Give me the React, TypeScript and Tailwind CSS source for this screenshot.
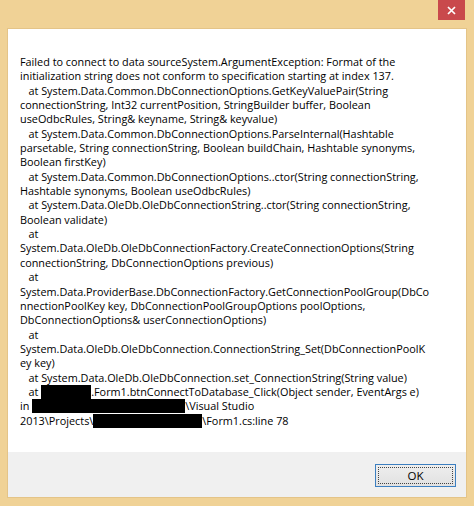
import React from 'react';

const lines: string[] = [
  'Failed to connect to data sourceSystem.ArgumentException: Format of the',
  'initialization string does not conform to specification starting at index 137.',
  '   at System.Data.Common.DbConnectionOptions.GetKeyValuePair(String',
  'connectionString, Int32 currentPosition, StringBuilder buffer, Boolean',
  'useOdbcRules, String& keyname, String& keyvalue)',
  '   at System.Data.Common.DbConnectionOptions.ParseInternal(Hashtable',
  'parsetable, String connectionString, Boolean buildChain, Hashtable synonyms,',
  'Boolean firstKey)',
  '   at System.Data.Common.DbConnectionOptions..ctor(String connectionString,',
  'Hashtable synonyms, Boolean useOdbcRules)',
  '   at System.Data.OleDb.OleDbConnectionString..ctor(String connectionString,',
  'Boolean validate)',
  '   at',
  'System.Data.OleDb.OleDbConnectionFactory.CreateConnectionOptions(String',
  'connectionString, DbConnectionOptions previous)',
  '   at',
  'System.Data.ProviderBase.DbConnectionFactory.GetConnectionPoolGroup(DbCo',
  'nnectionPoolKey key, DbConnectionPoolGroupOptions poolOptions,',
  'DbConnectionOptions& userConnectionOptions)',
  '   at',
  'System.Data.OleDb.OleDbConnection.ConnectionString_Set(DbConnectionPoolK',
  'ey key)',
  '   at System.Data.OleDb.OleDbConnection.set_ConnectionString(String value)',
];

// blacked-out bits of the original screenshot
function Redacted({ w }: { w: number }) {
  return <span className="inline-block h-[14px] bg-black align-[-3px]" style={{ width: w }} />;
}

export default function App() {
  return (
    <div
      className="w-[474px] h-[506px] bg-[#f0d296] flex flex-col overflow-hidden"
      style={{ fontFamily: '"Open Sans", sans-serif' }}
    >
      {/* title bar */}
      <div className="h-[29px] shrink-0 flex justify-end items-start pr-[9px]">
        <div className="w-[27px] h-[20px] shrink-0 bg-[#c9494c] flex items-center justify-center">
          <svg width="9" height="9" viewBox="0 0 9 9" className="block">
            <path d="M1 1L8 8M8 1L1 8" stroke="white" strokeWidth="1.7" />
          </svg>
        </div>
      </div>

      {/* client area */}
      <div className="mx-[8px] h-[468px] flex flex-col bg-white shadow-[0_0_0_1px_#e4c488]">
        <div className="flex-1 pt-[26px] pl-[12px] text-[10.85px] leading-[14.35px] text-black whitespace-pre">
          {lines.map((l, i) => (
            <div key={i}>{l}</div>
          ))}
          <div>
            {'   at '}
            <Redacted w={50} />
            .Form1.btnConnectToDatabase_Click(Object sender, EventArgs e)
          </div>
          <div>
            {'in '}
            <Redacted w={153} />
            \Visual Studio
          </div>
          <div>
            2013\Projects\
            <Redacted w={109} />
            \Form1.cs:line 78
          </div>
        </div>

        <div className="h-[45px] bg-[#f0f0f0] flex justify-end items-start pt-[12px] pr-[10px]">
          <div className="w-[81px] h-[23px] border border-[#3c7fc0] bg-gradient-to-b from-[#eeeeee] to-[#e1e1e1] p-[2px]">
            <div className="w-full h-full border border-dotted border-[#444] flex items-center justify-center text-[11.5px] text-black">
              OK
            </div>
          </div>
        </div>
      </div>
    </div>
  );
}
